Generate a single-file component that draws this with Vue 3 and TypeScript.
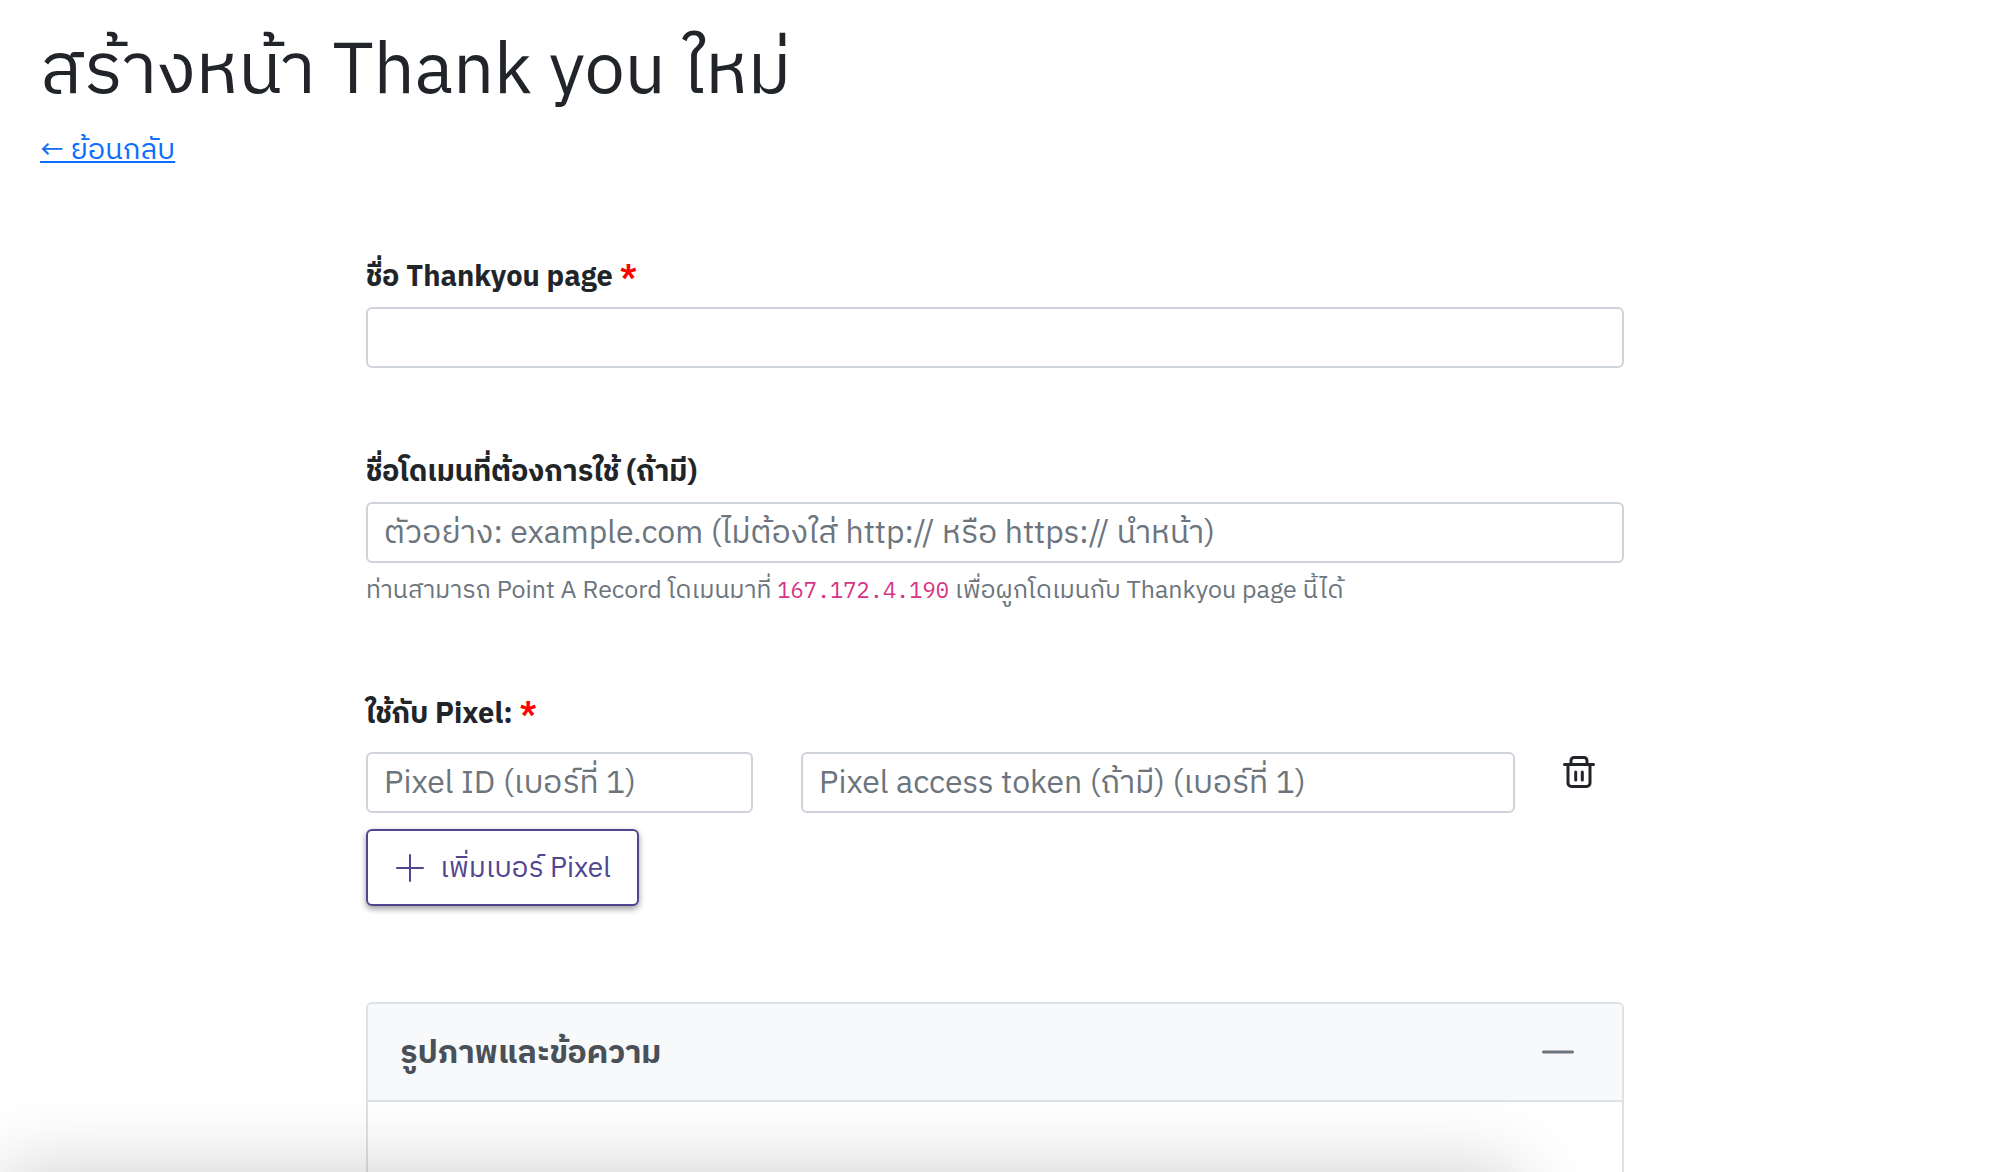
<script setup lang="ts">
import { ref } from 'vue'

interface PixelRow {
  key: number
  id: string
  token: string
}

const pageName = ref('')
const domain = ref('')
const pixels = ref<PixelRow[]>([{ key: 1, id: '', token: '' }])
const contentOpen = ref(true)
let nextKey = 2

function addPixel(): void {
  pixels.value.push({ key: nextKey++, id: '', token: '' })
}

function removePixel(key: number): void {
  pixels.value = pixels.value.filter((row) => row.key !== key)
}
</script>

<template>
  <div class="page">
    <header class="page-header">
      <h1>สร้างหน้า Thank you ใหม่</h1>
      <a class="back" href="#">← ย้อนกลับ</a>
    </header>

    <form class="form" @submit.prevent>
      <div class="field">
        <label class="label" for="page-name">ชื่อ Thankyou page <span class="required">*</span></label>
        <input id="page-name" v-model="pageName" class="input" type="text" required />
      </div>

      <div class="field">
        <label class="label" for="domain">ชื่อโดเมนที่ต้องการใช้ (ถ้ามี)</label>
        <input
          id="domain"
          v-model="domain"
          class="input"
          type="text"
          placeholder="ตัวอย่าง: example.com (ไม่ต้องใส่ http:// หรือ https:// นำหน้า)"
          aria-describedby="domain-help"
        />
        <p id="domain-help" class="help">
          ท่านสามารถ Point A Record โดเมนมาที่ <code>167.172.4.190</code> เพื่อผูกโดเมนกับ Thankyou page นี้ได้
        </p>
      </div>

      <div class="field">
        <label class="label" for="pixel-id-1">ใช้กับ Pixel: <span class="required">*</span></label>
        <div class="pixel-list">
          <div v-for="(row, i) in pixels" :key="row.key" class="pixel-row">
            <input
              :id="`pixel-id-${i + 1}`"
              v-model="row.id"
              class="input"
              type="text"
              :placeholder="`Pixel ID (เบอร์ที่ ${i + 1})`"
            />
            <input
              v-model="row.token"
              class="input"
              type="text"
              :placeholder="`Pixel access token (ถ้ามี) (เบอร์ที่ ${i + 1})`"
              :aria-label="`Pixel access token ${i + 1}`"
            />
            <button class="trash" type="button" aria-label="ลบ" @click="removePixel(row.key)">
              <svg viewBox="0 0 32 32" width="32" height="32" fill="none" stroke="currentColor" stroke-width="3" stroke-linecap="round" stroke-linejoin="round" aria-hidden="true">
                <path d="M1.5 8.5h29M8 8V4.5a3 3 0 0 1 3-3h10a3 3 0 0 1 3 3V8M5 9v18a3.5 3.5 0 0 0 3.5 3.5h15A3.5 3.5 0 0 0 27 27V9M12.7 16v8M19.3 16v8" />
              </svg>
            </button>
          </div>
        </div>
        <button class="add" type="button" @click="addPixel">
          <svg viewBox="0 0 28 28" width="28" height="28" fill="none" stroke="currentColor" stroke-width="2" stroke-linecap="round" aria-hidden="true">
            <path d="M14 1v26M1 14h26" />
          </svg>
          <span class="add-text">เพิ่มเบอร์ Pixel</span>
        </button>
      </div>

      <section class="panel">
        <button class="panel-head" type="button" :aria-expanded="contentOpen" @click="contentOpen = !contentOpen">
          <span class="panel-title">รูปภาพและข้อความ</span>
          <svg viewBox="0 0 32 32" width="32" height="32" fill="none" stroke="#6c757d" stroke-width="3" stroke-linecap="round" aria-hidden="true">
            <path d="M1.5 16h29" />
          </svg>
        </button>
        <div v-if="contentOpen" class="panel-body"></div>
      </section>
    </form>

    <div class="dock-shadow" aria-hidden="true"></div>
  </div>
</template>

<style>
body {
  margin: 0;
  background: #fff;
}
</style>

<style scoped>
.page {
  box-sizing: border-box;
  display: flex;
  flex-direction: column;
  min-height: 100vh;
  padding: 28px 48px 0 40px;
  color: #212529;
  font-family: 'IBM Plex Sans Thai', Roboto, 'Noto Sans Thai', 'Noto Sans', sans-serif;
  font-size: 29px;
  line-height: 42px;
}

.page-header {
  display: flex;
  flex-direction: column;
  align-items: flex-start;
  gap: 14px;
}

h1 {
  margin: 0;
  font-size: 72px;
  line-height: 88px;
  font-weight: 400;
}

.back {
  color: #0d6efd;
  text-decoration: underline;
}

.form {
  display: flex;
  flex: 1;
  flex-direction: column;
  gap: 84px;
  box-sizing: border-box;
  width: 100%;
  max-width: 1258px;
  margin: 0 auto;
  padding-top: 85px;
}

.field {
  display: flex;
  flex-direction: column;
}

.label {
  margin-bottom: 8px;
  font-weight: 700;
}

.required {
  color: #f00;
}

.input {
  box-sizing: border-box;
  width: 100%;
  min-width: 0;
  height: 61px;
  padding: 2px 16px 0;
  border: 2px solid #ced4da;
  border-radius: 6px;
  background: #fff;
  color: #212529;
  font: inherit;
  font-size: 32px;
}

.input::placeholder {
  color: #6c757d;
  opacity: 1;
}

.help {
  margin: 8px 0 0;
  color: #6c757d;
  font-size: 25px;
  line-height: 38px;
}

code {
  color: #d63384;
  font-family: 'IBM Plex Mono', 'Liberation Mono', monospace;
  font-size: 22px;
}

.pixel-list {
  display: flex;
  flex-direction: column;
  gap: 16px;
  padding: 8px 0 16px;
}

.pixel-row {
  display: grid;
  grid-template-columns: minmax(0, 387fr) minmax(0, 714fr) 61px;
  gap: 48px;
}

.trash {
  align-self: start;
  width: 32px;
  height: 40px;
  padding: 0;
  border: 0;
  background: none;
  color: #212529;
  cursor: pointer;
}

.trash svg,
.add svg,
.panel-head svg {
  display: block;
}

.add {
  display: flex;
  align-items: center;
  align-self: flex-start;
  gap: 16px;
  height: 77px;
  padding: 0 26px 0 28px;
  border: 2px solid #51458f;
  border-radius: 6px;
  background: #fff;
  box-shadow: 0 3px 6px rgba(0, 0, 0, 0.4);
  color: #51458f;
  font: inherit;
  font-size: 28px;
  cursor: pointer;
}

.add-text {
  padding-top: 2px;
}

.panel {
  display: flex;
  flex: 1;
  flex-direction: column;
  margin-top: 12px;
  border: 2px solid #dee2e6;
  border-bottom: 0;
  border-radius: 6px 6px 0 0;
}

.panel-head {
  display: flex;
  align-items: center;
  justify-content: space-between;
  height: 98px;
  padding: 0 48px 0 32px;
  border: 0;
  border-bottom: 2px solid #dee2e6;
  border-radius: 4px 4px 0 0;
  background: #f8f9fb;
  color: #495057;
  font: inherit;
  font-size: 32px;
  font-weight: 700;
  cursor: pointer;
}

.panel-title {
  padding-top: 4px;
}

.panel-body {
  flex: 1;
}

.dock-shadow {
  position: fixed;
  top: 100%;
  left: 0;
  width: 76%;
  height: 200px;
  box-shadow: 0 0 80px rgba(0, 0, 0, 0.2);
  pointer-events: none;
}
</style>
